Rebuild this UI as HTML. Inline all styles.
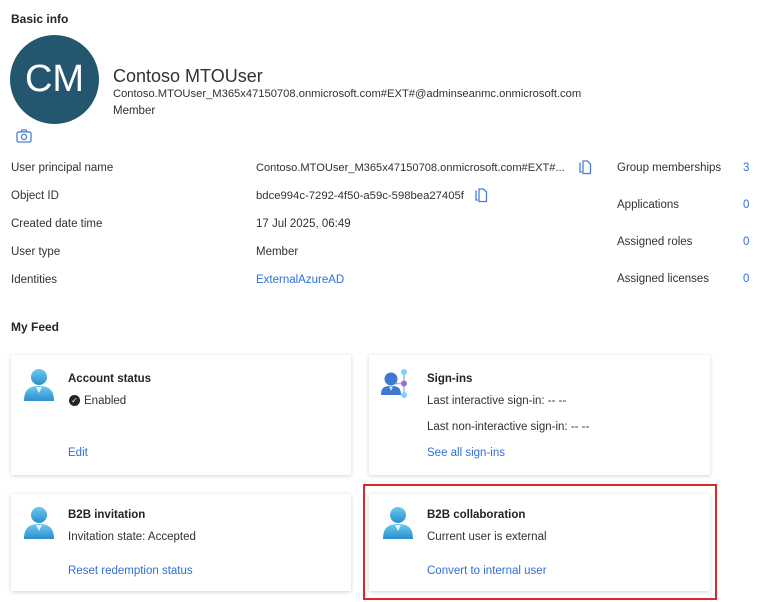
<!DOCTYPE html>
<html><head><meta charset="utf-8"><style>
*{margin:0;padding:0;box-sizing:border-box}
body{width:768px;height:602px;background:#fff;font-family:"Liberation Sans",sans-serif;color:#323130;position:relative;overflow:hidden;font-size:11.5px}
.a{position:absolute;white-space:nowrap}
.b{font-weight:bold;color:#242424}
.l{color:#2f6fd6}
.card{position:absolute;background:#fff;box-shadow:0 1px 4px rgba(0,0,0,.18);border-radius:2px}
</style></head><body>
<div class="a b" style="left:11px;top:12px;font-size:12px">Basic info</div>
<div class="a" style="left:10px;top:35px;width:89px;height:89px;border-radius:50%;background:#255670;color:#fff;font-size:38px;line-height:89px;text-align:center">CM</div>
<svg class="a" style="left:16px;top:129px" width="16" height="14" viewBox="0 0 16 14"><rect x="1" y="3" width="14" height="10" rx="1.5" fill="none" stroke="#4a7ed6" stroke-width="1.3"/><path d="M5 3 L6 1 H10 L11 3" fill="none" stroke="#4a7ed6" stroke-width="1.3"/><circle cx="8" cy="8" r="2.6" fill="none" stroke="#4a7ed6" stroke-width="1.3"/></svg>
<div class="a" style="left:113px;top:66px;font-size:18px;color:#323130">Contoso MTOUser</div>
<div class="a" style="left:113px;top:88px;font-size:11.2px">Contoso.MTOUser_M365x47150708.onmicrosoft.com#EXT#@adminseanmc.onmicrosoft.com</div>
<div class="a" style="left:113px;top:105px">Member</div>

<div class="a" style="left:11px;top:162px">User principal name</div>
<div class="a" style="left:11px;top:190px">Object ID</div>
<div class="a" style="left:11px;top:218px">Created date time</div>
<div class="a" style="left:11px;top:246px">User type</div>
<div class="a" style="left:11px;top:274px">Identities</div>
<div class="a" style="left:256px;top:162px;font-size:11.1px">Contoso.MTOUser_M365x47150708.onmicrosoft.com#EXT#...</div>
<div class="a" style="left:256px;top:190px;font-size:11.3px">bdce994c-7292-4f50-a59c-598bea27405f</div>
<div class="a" style="left:256px;top:218px">17 Jul 2025, 06:49</div>
<div class="a" style="left:256px;top:246px">Member</div>
<div class="a l" style="left:256px;top:274px">ExternalAzureAD</div>
<svg class="a" style="left:579px;top:160px" width="13" height="15" viewBox="0 0 13 15"><path d="M1 2.5 V12 H3" fill="none" stroke="#4a7ed6" stroke-width="1.3"/><path d="M4 1 H8.5 L11.5 4 V13.5 H4 Z" fill="none" stroke="#4a7ed6" stroke-width="1.3"/></svg>
<svg class="a" style="left:475px;top:188px" width="13" height="15" viewBox="0 0 13 15"><path d="M1 2.5 V12 H3" fill="none" stroke="#4a7ed6" stroke-width="1.3"/><path d="M4 1 H8.5 L11.5 4 V13.5 H4 Z" fill="none" stroke="#4a7ed6" stroke-width="1.3"/></svg>

<div class="a" style="left:617px;top:162px">Group memberships</div>
<div class="a" style="left:617px;top:199px">Applications</div>
<div class="a" style="left:617px;top:236px">Assigned roles</div>
<div class="a" style="left:617px;top:273px">Assigned licenses</div>
<div class="a l" style="left:743px;top:162px">3</div>
<div class="a l" style="left:743px;top:199px">0</div>
<div class="a l" style="left:743px;top:236px">0</div>
<div class="a l" style="left:743px;top:273px">0</div>

<div class="a b" style="left:11px;top:320px;font-size:12px;font-weight:600">My Feed</div>

<svg width="0" height="0" style="position:absolute"><defs>
<linearGradient id="g" x1="0" y1="0" x2="0" y2="1"><stop offset="0" stop-color="#6cc8f0"/><stop offset="1" stop-color="#2a8fcc"/></linearGradient>
<symbol id="p" viewBox="0 0 30 34"><circle cx="15" cy="9" r="8" fill="url(#g)"/><path d="M0 33 C0 22 5 18 15 18 C25 18 30 22 30 33 Z" fill="url(#g)"/><path d="M12 19 L15 25 L18 19 Z" fill="#e8f4fb"/></symbol>
</defs></svg>

<div class="card" style="left:11px;top:355px;width:340px;height:120px"></div>
<svg class="a" style="left:24px;top:368px" width="30" height="34"><use href="#p"/></svg>
<div class="a b" style="left:68px;top:373px">Account status</div>
<div class="a" style="left:69px;top:395px;width:11px;height:11px;border-radius:50%;background:#242424;color:#fff;font-size:8px;line-height:11px;text-align:center">✓</div>
<div class="a" style="left:84px;top:395px">Enabled</div>
<div class="a l" style="left:68px;top:447px">Edit</div>

<div class="card" style="left:369px;top:355px;width:341px;height:120px"></div>
<svg class="a" style="left:381px;top:368px" width="34" height="36" viewBox="0 0 34 36"><path d="M23 5 V26 M13 15.5 H23" stroke="#b0b8c8" stroke-width="1.5"/><circle cx="23" cy="4" r="3" fill="#7dd3f5"/><circle cx="23" cy="15.5" r="3" fill="#9b6ddb"/><circle cx="23" cy="27" r="3" fill="#7dd3f5"/><circle cx="10" cy="11" r="6.5" fill="#3f78d0"/><path d="M0 27 C0 19 4 18 10 18 C16 18 20 19 20 27 Z" fill="#3f78d0"/><path d="M8 18.5 L10 23 L12 18.5 Z" fill="#dbe6f7"/></svg>
<div class="a b" style="left:427px;top:373px">Sign-ins</div>
<div class="a" style="left:427px;top:395px">Last interactive sign-in: -- --</div>
<div class="a" style="left:427px;top:421px">Last non-interactive sign-in: -- --</div>
<div class="a l" style="left:427px;top:447px">See all sign-ins</div>

<div class="card" style="left:11px;top:494px;width:340px;height:97px"></div>
<svg class="a" style="left:24px;top:506px" width="30" height="34"><use href="#p"/></svg>
<div class="a b" style="left:68px;top:509px">B2B invitation</div>
<div class="a" style="left:68px;top:531px">Invitation state: Accepted</div>
<div class="a l" style="left:68px;top:565px">Reset redemption status</div>

<div class="card" style="left:369px;top:494px;width:341px;height:97px"></div>
<div class="a" style="left:363px;top:484px;width:354px;height:116px;border:2px solid #e0262b"></div>
<svg class="a" style="left:383px;top:506px" width="30" height="34"><use href="#p"/></svg>
<div class="a b" style="left:427px;top:509px">B2B collaboration</div>
<div class="a" style="left:427px;top:531px">Current user is external</div>
<div class="a l" style="left:427px;top:565px">Convert to internal user</div>
</body></html>
